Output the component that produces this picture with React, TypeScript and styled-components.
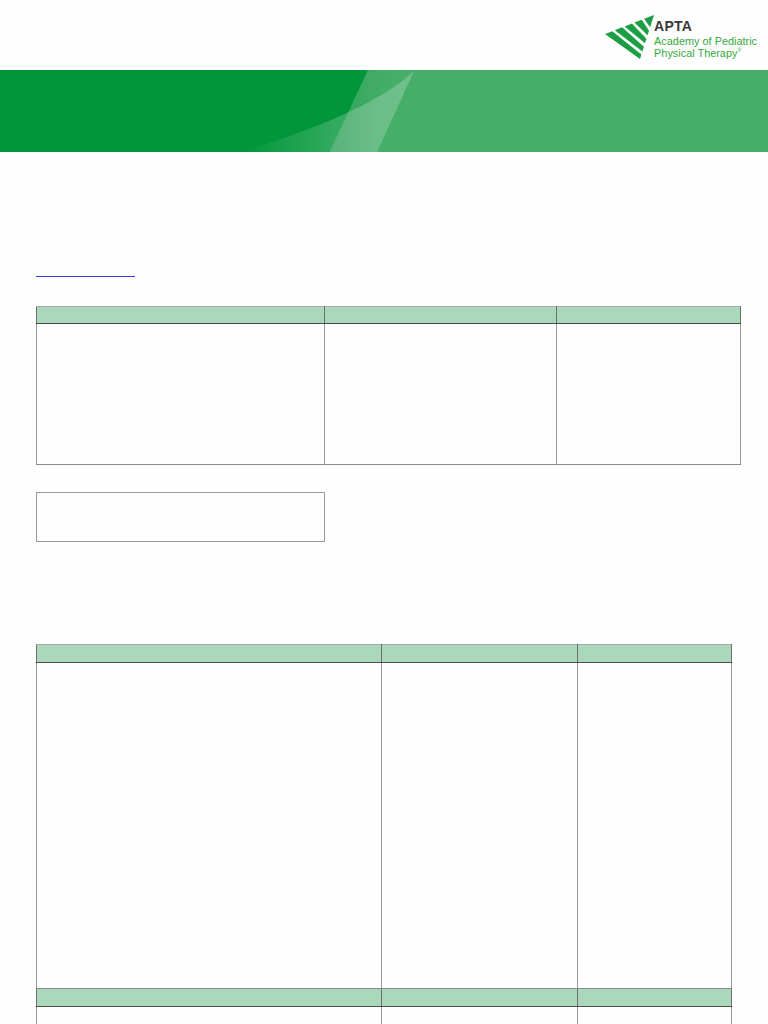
import React from "react";
import styled, { createGlobalStyle } from "styled-components";

const Global = createGlobalStyle`
  html, body { margin: 0; padding: 0; background: #fefefe; }
  body { font-family: "Liberation Sans", Arial, sans-serif; color: #222; }
`;

const Page = styled.div`
  width: 768px;
  min-height: 1024px;
  overflow: hidden;
  background: #fefefe;
`;

const TopBar = styled.header`
  height: 70px;
  display: flex;
  justify-content: flex-end;
  align-items: flex-start;
  padding-right: 11px;
`;

const Logo = styled.div`
  display: flex;
  align-items: flex-start;
  margin-top: 12px;
`;

const LogoMark = styled.svg`
  width: 56px;
  height: 50px;
  display: block;
  margin-right: -3px;
`;

const LogoText = styled.div`
  display: flex;
  flex-direction: column;
  padding-top: 6px;
`;

const LogoTitle = styled.span`
  font-family: "Liberation Sans", Arial, sans-serif;
  font-weight: 700;
  font-size: 14px;
  line-height: 16.5px;
  color: #3a3a3a;
  letter-spacing: 0.2px;
`;

const LogoSub = styled.span`
  font-family: "Liberation Sans", Arial, sans-serif;
  font-size: 10.9px;
  line-height: 12.3px;
  color: #35a83d;
  letter-spacing: 0px;
  white-space: nowrap;
`;

const Reg = styled.sup`
  font-size: 5px;
  line-height: 0;
  vertical-align: 5px;
`;

const Banner = styled.div`
  height: 82px;
  background: #46ae69;
`;

const BannerArt = styled.svg`
  display: block;
  width: 768px;
  height: 82px;
`;

const Content = styled.main`
  padding: 110px 28px 0 36px;
  display: flex;
  flex-direction: column;
  align-items: flex-start;
`;

const Link = styled.a`
  display: inline-block;
  width: 99px;
  height: 14px;
  border-bottom: 1px solid #3838ee;
  color: #3838ee;
`;

const Table = styled.table<{ $width: number; $mt: number }>`
  width: ${(p) => p.$width}px;
  margin-top: ${(p) => p.$mt}px;
  border-collapse: collapse;
  table-layout: fixed;
`;

const Th = styled.th<{ $w?: number; $h?: number }>`
  ${(p) => (p.$w ? `width: ${p.$w}px;` : "")}
  height: ${(p) => p.$h ?? 16}px;
  padding: 0;
  background: #aad8bb;
  border: 1px solid #6e6e6e;
  border-top-color: #a9a9a9;
  border-bottom-color: #4a4a4a;
`;

const Td = styled.td<{ $h: number }>`
  height: ${(p) => p.$h}px;
  padding: 0;
  border: 1px solid #9a9a9a;
  border-bottom-color: #8a8a8a;
`;

const NoteBox = styled.div`
  width: 287px;
  height: 48px;
  margin-top: 27px;
  border: 1px solid #999;
`;

export default function App() {
  const stripes = [
    "4,22 11.35,19.15 40.4,42.6 39,47",
    "13.8,18.2 21.15,15.35 42.9,34.7 41.4,39.5",
    "23.6,14.4 30.95,11.55 45.4,26.8 44,31.2",
    "33.4,10.6 40.75,7.75 48,18.8 46.6,23.2",
    "43.2,6.8 53,3 49.1,15.3",
  ];
  return (
    <Page>
      <Global />
      <TopBar>
        <Logo>
          <LogoMark viewBox="0 0 56 50">
            {stripes.map((pts, i) => (
              <polygon key={i} points={pts} fill="#1c9e45" />
            ))}
          </LogoMark>
          <LogoText>
            <LogoTitle>APTA</LogoTitle>
            <LogoSub>Academy of Pediatric</LogoSub>
            <LogoSub>
              Physical Therapy<Reg>®</Reg>
            </LogoSub>
          </LogoText>
        </Logo>
      </TopBar>
      <Banner>
        <BannerArt viewBox="0 0 768 82" preserveAspectRatio="none">
          <defs>
            <linearGradient id="under" x1="240" y1="0" x2="400" y2="0" gradientUnits="userSpaceOnUse">
              <stop offset="0" stopColor="#ffffff" stopOpacity="0" />
              <stop offset="0.6" stopColor="#ffffff" stopOpacity="0.2" />
              <stop offset="1" stopColor="#ffffff" stopOpacity="0.22" />
            </linearGradient>
            <linearGradient id="band" x1="330" y1="0" x2="413" y2="0" gradientUnits="userSpaceOnUse">
              <stop offset="0" stopColor="#2a9f55" stopOpacity="0.9" />
              <stop offset="1" stopColor="#46ae69" stopOpacity="0" />
            </linearGradient>
          </defs>
          <rect x="0" y="0" width="768" height="82" fill="#46ae69" />
          <polygon points="0,0 368,0 330,82 0,82" fill="#009639" />
          <polygon points="368,0 414,0 377,82 330,82" fill="url(#band)" />
          <path d="M240,82 Q368,44 414,1 L377,82 Z" fill="url(#under)" />
        </BannerArt>
      </Banner>
      <Content>
        <Link href="#" aria-label="link" />
        <Table $width={705} $mt={29}>
          <thead>
            <tr>
              <Th $w={287} />
              <Th $w={231} />
              <Th />
            </tr>
          </thead>
          <tbody>
            <tr>
              <Td $h={140} />
              <Td $h={140} />
              <Td $h={140} />
            </tr>
          </tbody>
        </Table>
        <NoteBox />
        <Table $width={696} $mt={102}>
          <thead>
            <tr>
              <Th $w={344} $h={17} />
              <Th $w={195} $h={17} />
              <Th $h={17} />
            </tr>
          </thead>
          <tbody>
            <tr>
              <Td $h={325} />
              <Td $h={325} />
              <Td $h={325} />
            </tr>
            <tr>
              <Th $h={17} />
              <Th $h={17} />
              <Th $h={17} />
            </tr>
            <tr>
              <Td $h={60} />
              <Td $h={60} />
              <Td $h={60} />
            </tr>
          </tbody>
        </Table>
      </Content>
    </Page>
  );
}
